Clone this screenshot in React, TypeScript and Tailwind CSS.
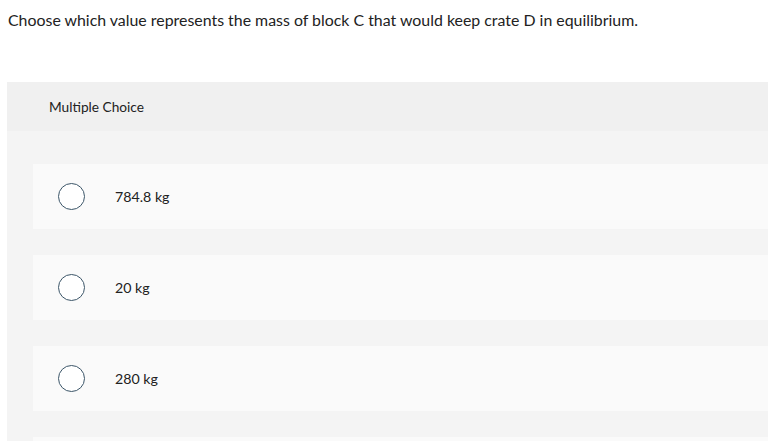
import React from "react";

const options = ["784.8 kg", "20 kg", "280 kg", ""];

export default function App() {
  return (
    <div className="w-[768px] h-[441px] overflow-hidden bg-white" style={{ fontFamily: "Lato, 'Open Sans', sans-serif" }}>
      <div className="pl-[8px] pt-[10px] h-[82px] text-[15.9px] text-[#222] leading-[20px]">
        Choose which value represents the mass of block C that would keep crate D in equilibrium.
      </div>
      <div className="ml-[7px] bg-[#f4f4f4]">
        <div className="h-[49px] bg-[#f0f0f0] pl-[42px] pt-[1px] flex items-center text-[13.7px] text-[#222]">
          Multiple Choice
        </div>
        <div className="pl-[26px] pt-[33px] flex flex-col gap-[26px]">
          {options.map((o, i) => (
            <div key={i} className="h-[65px] bg-[#fafafa] flex items-center">
              {o && (
                <>
                  <div className="ml-[25px] w-[27px] h-[27px] rounded-full border border-[#3b5568] bg-white" />
                  <div className="ml-[30px] pt-[1px] text-[14.2px] text-[#222]">{o}</div>
                </>
              )}
            </div>
          ))}
        </div>
      </div>
    </div>
  );
}
